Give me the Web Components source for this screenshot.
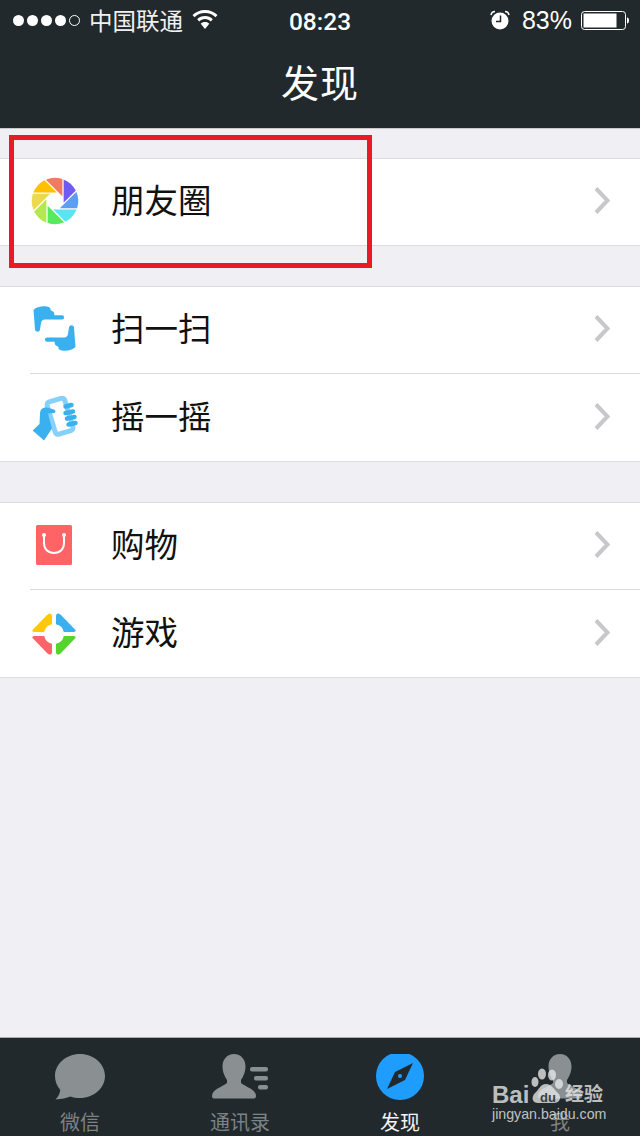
<!DOCTYPE html>
<html lang="zh">
<head>
<meta charset="utf-8">
<title>发现</title>
<style>
html, body { margin: 0; padding: 0; }
body { width: 640px; height: 1136px; overflow: hidden; background: #efeff4; font-family: "Liberation Sans", "Noto Sans CJK SC", sans-serif; }
discover-page { height: 1136px; }
</style>
</head>
<body>
<discover-page>
  <status-bar slot="top"></status-bar>
  <nav-bar slot="top" title="发现"></nav-bar>

  <row-group style="margin-top:29px">
    <row-item>
      <svg slot="icon" width="50" height="50" viewBox="-25 -24 50 50">
        <path fill="#6f5bf1" d="M8.600-21.600A23.300 23.300 0 0 1 20.800-10.400L8.600 1.800Z"/>
        <path fill="#5c9ff2" d="M8.600-21.600A23.300 23.300 0 0 1 20.800-10.400L8.600 1.800Z" transform="rotate(45)"/>
        <path fill="#5ae4f1" d="M8.600-21.600A23.300 23.300 0 0 1 20.800-10.400L8.600 1.800Z" transform="rotate(90)"/>
        <path fill="#59e95f" d="M8.600-21.600A23.300 23.300 0 0 1 20.800-10.400L8.600 1.800Z" transform="rotate(135)"/>
        <path fill="#b3e94f" d="M8.600-21.600A23.300 23.300 0 0 1 20.800-10.400L8.600 1.800Z" transform="rotate(180)"/>
        <path fill="#eed94e" d="M8.600-21.600A23.300 23.300 0 0 1 20.800-10.400L8.600 1.800Z" transform="rotate(225)"/>
        <path fill="#ffc000" d="M8.600-21.600A23.300 23.300 0 0 1 20.800-10.400L8.600 1.800Z" transform="rotate(270)"/>
        <path fill="#f17a60" d="M8.600-21.600A23.300 23.300 0 0 1 20.800-10.400L8.600 1.800Z" transform="rotate(315)"/>
      </svg>
      朋友圈
    </row-item>
  </row-group>

  <row-group style="margin-top:40px">
    <row-item>
      <svg slot="icon" width="50" height="50" viewBox="0 0 50 50">
        <g fill="#3bb0ef">
          <path d="M3.500 5C6 2 12 .8 17 1.500C20 2 21 3.500 20.500 5L23 6.500C24.500 7.500 24 9 24.500 10.300H32A2.100 2.100 0 0 1 32 14.500H15C12.500 14.500 11.500 16 11 18L10 24.500C9.500 27.500 5.500 27.500 5 24.500Z"/>
          <path d="M3.500 5C6 2 12 .8 17 1.500C20 2 21 3.500 20.500 5L23 6.500C24.500 7.500 24 9 24.500 10.300H32A2.100 2.100 0 0 1 32 14.500H15C12.500 14.500 11.500 16 11 18L10 24.500C9.500 27.500 5.500 27.500 5 24.500Z" transform="rotate(180 24.500 23.500)"/>
        </g>
      </svg>
      扫一扫
    </row-item>
    <row-item>
      <svg slot="icon" width="50" height="50" viewBox="0 0 50 50">
        <rect x="20.800" y="6.400" width="18.400" height="33.700" rx="3" fill="#fff" stroke="#85d1fc" stroke-width="5" transform="rotate(-17 30 23.200)"/>
        <path fill="#3bb0ef" d="M2.700 37.500 9.500 31 10 21C10 16 13 14 17 14.500L24 16.500C26 17.500 26 19.500 24 20L18 20.500 22 35.500 14 47.500Z"/>
        <g stroke="#3bb0ef" stroke-width="4.500" stroke-linecap="round">
          <path d="M35.500 13.500 41.500 12"/>
          <path d="M35.500 20 43 18.500"/>
          <path d="M37 25.500 44.500 24"/>
          <path d="M38.500 31.500 45.500 30"/>
        </g>
      </svg>
      摇一摇
    </row-item>
  </row-group>

  <row-group style="margin-top:40px">
    <row-item>
      <svg slot="icon" width="50" height="50" viewBox="0 0 50 50">
        <rect x="6" y="4" width="36" height="40" rx="1.500" fill="#fe6466"/>
        <path d="M14 14V22C14 28 18 32 24 32S34 28 34 22V14" fill="none" stroke="#fff" stroke-width="2"/>
        <circle cx="14" cy="14" r="2" fill="#fff"/>
        <circle cx="34" cy="14" r="2" fill="#fff"/>
      </svg>
      购物
    </row-item>
    <row-item>
      <svg slot="icon" width="50" height="50" viewBox="0 0 50 50">
        <path fill="#ffc80a" d="M3 20.500 17 6C19.500 3.500 22 4 22 7V15.200A10 10 0 0 0 14.200 23H5C2.500 23 1.500 22 3 20.500Z"/>
        <path fill="#3bb0ef" d="M3 20.500 17 6C19.500 3.500 22 4 22 7V15.200A10 10 0 0 0 14.200 23H5C2.500 23 1.500 22 3 20.500Z" transform="translate(48 0) scale(-1 1)"/>
        <path fill="#fb6468" d="M3 20.500 17 6C19.500 3.500 22 4 22 7V15.200A10 10 0 0 0 14.200 23H5C2.500 23 1.500 22 3 20.500Z" transform="translate(0 50) scale(1 -1)"/>
        <path fill="#55d42c" d="M3 20.500 17 6C19.500 3.500 22 4 22 7V15.200A10 10 0 0 0 14.200 23H5C2.500 23 1.500 22 3 20.500Z" transform="translate(48 50) scale(-1 -1)"/>
      </svg>
      游戏
    </row-item>
  </row-group>

  <tab-bar slot="bottom">
    <tab-item label="微信">
      <svg width="56" height="52" viewBox="0 0 56 52"><path fill="#8a8f91" d="M28 0C41.800 0 53 9.800 53 22S41.800 44 28 44C24.500 44 21 43.300 18.500 42.400 14.500 44 10 44.800 3.500 45.500 6.500 42.500 7.800 39.500 8.300 36 4.800 32 3 27.300 3 22 3 9.800 14.200 0 28 0Z"/></svg>
    </tab-item>
    <tab-item label="通讯录">
      <svg width="56" height="52" viewBox="0 0 56 52"><g transform="translate(-12 0)" fill="#8a8f91">
        <path d="M34 0C41 0 45.500 5.500 45.500 12.500 45.500 18 43 23 41 26V29C46 33 56 35.500 56 42C56 44 55 44.500 53 44.500H15C13 44.500 12 44 12 42 12 35.500 22 33 27 29V26C25 23 22.500 18 22.500 12.500 22.500 5.500 27 0 34 0Z"/>
        <rect x="50" y="13" width="18" height="4.500" rx="2"/><rect x="54" y="22" width="14" height="4.500" rx="2"/><rect x="58" y="31" width="10" height="4.500" rx="2"/>
      </g></svg>
    </tab-item>
    <tab-item label="发现" active>
      <svg width="56" height="52" viewBox="0 0 56 52"><circle cx="28" cy="22" r="24" fill="#1f9dff"/><path fill="#22292c" d="M41 9 33 26 15 35 23 18Z"/><circle cx="28" cy="22" r="2" fill="#1f9dff"/></svg>
    </tab-item>
    <tab-item label="我">
      <svg width="56" height="52" viewBox="0 0 56 52"><path fill="#8a8f91" d="M28 0C35 0 39.500 5.500 39.500 12.500 39.500 18 37 23 35 26V29C40 33 50 35.500 50 42 50 44 49 44.500 47 44.500H9C7 44.500 6 44 6 42 6 35.500 16 33 21 29V26C19 23 16.500 18 16.500 12.500 16.500 5.500 21 0 28 0Z"/></svg>
    </tab-item>
  </tab-bar>

  <red-mark slot="over"></red-mark>
  <baidu-mark slot="over"></baidu-mark>
</discover-page>

<script>
class DiscoverPage extends HTMLElement {
    constructor() {
        super();
        this.attachShadow({ mode: 'open' });
        this.shadowRoot.innerHTML = `
        <style>
        :host { display: flex; flex-direction: column; position: relative; width: 640px; background: #efeff4; overflow: hidden; }
        main { flex: 1; display: flex; flex-direction: column; }
        </style>
        <slot name="top"></slot>
        <main><slot></slot></main>
        <slot name="bottom"></slot>
        <slot name="over"></slot>
        `;
    }
}
customElements.define('discover-page', DiscoverPage);

class StatusBar extends HTMLElement {
    constructor() {
        super();
        this.attachShadow({ mode: 'open' });
        this.shadowRoot.innerHTML = `
        <style>
        :host { display: grid; grid-template-columns: 1fr auto 1fr; align-items: center; height: 40px; padding: 0 11px 0 13px; background: #22292c; color: #fff; font-family: "Liberation Sans", "Noto Sans CJK SC", sans-serif; }
        .left, .right { display: flex; align-items: center; }
        .right { justify-content: flex-end; }
        .dots { display: flex; gap: 3px; }
        .dots i { width: 11px; height: 11px; border-radius: 50%; background: #fff; box-sizing: border-box; }
        .dots i:last-child { background: none; border: 1px solid #fff; }
        .carrier { font-size: 23.5px; margin-left: 9px; color: #f0f0f0; }
        .wifi { margin-left: 9px; }
        .time { font-family: Roboto, "Liberation Sans", sans-serif; font-size: 24.5px; font-weight: 500; transform: translate(-1px, 1px); }
        .pct { font-size: 25px; margin-left: 11px; }
        .battery { margin-left: 9px; margin-top: 1px; }
        </style>
        <div class="left">
          <div class="dots"><i></i><i></i><i></i><i></i><i></i></div>
          <span class="carrier">中国联通</span>
          <svg class="wifi" width="26" height="20" viewBox="0 0 26 20">
            <path fill="#fff" d="M13 0C18 0 22.500 2 25.500 5L23.500 7.200C21 4.600 17.200 3 13 3S5 4.600 2.500 7.200L.5 5C3.500 2 8 0 13 0Z"/>
            <path fill="#fff" d="M13 6C16 6 18.800 7.200 20.800 9.200L18.800 11.400C17.300 9.900 15.300 9 13 9S8.700 9.900 7.200 11.400L5.200 9.200C7.200 7.200 10 6 13 6Z"/>
            <path fill="#fff" d="M13 12C14.800 12 16.300 12.600 17.300 13.700L13 19 8.700 13.700C9.700 12.600 11.200 12 13 12Z"/>
          </svg>
        </div>
        <div class="time">08:23</div>
        <div class="right">
          <svg width="22" height="20" viewBox="0 0 22 20">
            <path d="M2 5C2.500 2.500 4 1.500 6 1.500M20 5C19.500 2.500 18 1.500 16 1.500" fill="none" stroke="#fff" stroke-width="1.500"/>
            <circle cx="11" cy="11" r="8.500" fill="#fff"/>
            <path d="M11.500 5.500V11.500H7" fill="none" stroke="#22292c" stroke-width="1.500"/>
          </svg>
          <span class="pct">83%</span>
          <svg class="battery" width="48" height="20" viewBox="0 0 48 20">
            <rect x=".5" y=".5" width="44" height="18" rx="3" fill="none" stroke="#fff"/>
            <rect x="2.500" y="2.500" width="33" height="14" fill="#fff"/>
            <path fill="#fff" d="M46 6.500C47.500 6.500 48 8 48 9.500S47.500 12.500 46 12.500Z"/>
          </svg>
        </div>
        `;
    }
}
customElements.define('status-bar', StatusBar);

class NavBar extends HTMLElement {
    constructor() {
        super();
        this.attachShadow({ mode: 'open' });
    }
    connectedCallback() {
        const title = this.getAttribute('title') || '';
        this.shadowRoot.innerHTML = `
        <style>
        :host { display: flex; justify-content: center; align-items: center; height: 88px; background: #22292c; color: #fff; border-bottom: 1px solid #c9c9cc; font-family: "Noto Sans CJK SC", sans-serif; }
        h1 { margin: 0 0 7px; font-size: 38px; font-weight: 400; line-height: 1; letter-spacing: 1px; }
        </style>
        <h1>${title}</h1>
        `;
    }
}
customElements.define('nav-bar', NavBar);

class RowGroup extends HTMLElement {
    constructor() {
        super();
        this.attachShadow({ mode: 'open' });
        this.shadowRoot.innerHTML = `
        <style>
        :host { display: block; background: #fff; border-top: 1px solid #dcdcdc; border-bottom: 1px solid #dcdcdc; }
        </style>
        <slot></slot>
        `;
    }
}
customElements.define('row-group', RowGroup);

class RowItem extends HTMLElement {
    constructor() {
        super();
        this.attachShadow({ mode: 'open' });
        this.shadowRoot.innerHTML = `
        <style>
        :host { display: block; padding-left: 30px; font-family: "Noto Sans CJK SC", sans-serif; color: #111; }
        :host(:not(:first-child)) .in { border-top: 1px solid #dcdcdc; height: 87px; }
        .in { display: flex; align-items: center; height: 86px; padding-right: 28px; }
        .icon { width: 50px; height: 50px; margin-right: 31px; display: flex; }
        .label { flex: 1; font-size: 33.5px; line-height: 1; margin-top: -6px; }
        .arrow { margin-top: -2px; }
        </style>
        <div class="in">
          <div class="icon"><slot name="icon"></slot></div>
          <div class="label"><slot></slot></div>
          <svg class="arrow" width="20" height="30" viewBox="0 0 20 30"><path d="M4 2.500 15.500 14.500 4 26.500" fill="none" stroke="#c7c7cc" stroke-width="4"/></svg>
        </div>
        `;
    }
}
customElements.define('row-item', RowItem);

class TabBar extends HTMLElement {
    constructor() {
        super();
        this.attachShadow({ mode: 'open' });
        this.shadowRoot.innerHTML = `
        <style>
        :host { display: grid; grid-template-columns: repeat(4, 1fr); height: 98px; background: #22292c; border-top: 1px solid #a9a9ad; }
        </style>
        <slot></slot>
        `;
    }
}
customElements.define('tab-bar', TabBar);

class TabItem extends HTMLElement {
    constructor() {
        super();
        this.attachShadow({ mode: 'open' });
    }
    connectedCallback() {
        const label = this.getAttribute('label') || '';
        const colour = this.hasAttribute('active') ? '#f4f4f4' : '#7d8284';
        this.shadowRoot.innerHTML = `
        <style>
        :host { display: flex; flex-direction: column; align-items: center; padding-top: 16px; font-family: "Noto Sans CJK SC", sans-serif; }
        .icon { height: 52px; display: flex; }
        span { font-size: 20px; line-height: 24px; margin-top: 4px; color: ${colour}; }
        </style>
        <div class="icon"><slot></slot></div>
        <span>${label}</span>
        `;
    }
}
customElements.define('tab-item', TabItem);

class RedMark extends HTMLElement {
    constructor() {
        super();
        this.attachShadow({ mode: 'open' });
        this.shadowRoot.innerHTML = `
        <style>
        :host { position: absolute; left: 9px; top: 135px; width: 363px; height: 133px; box-sizing: border-box; border: 5px solid #e81b25; }
        </style>
        `;
    }
}
customElements.define('red-mark', RedMark);

class BaiduMark extends HTMLElement {
    constructor() {
        super();
        this.attachShadow({ mode: 'open' });
        this.shadowRoot.innerHTML = `
        <style>
        :host { position: absolute; left: 490px; top: 1066px; width: 118px; height: 60px; color: rgba(232,232,232,.8); font-family: "Liberation Sans", "Noto Sans CJK SC", sans-serif; }
        svg { position: absolute; left: 0; top: 0; }
        b { position: absolute; line-height: 1; white-space: nowrap; }
        .bai { left: 2px; top: 17px; font-size: 24px; }
        .du { left: 50px; top: 25px; font-size: 13px; color: #3a4043; }
        .jy { left: 75px; top: 19px; font-size: 19px; }
        .url { left: 2px; top: 41px; font-size: 14.200px; font-weight: 400; }
        </style>
        <svg width="118" height="60" viewBox="0 0 118 60" fill="rgba(232,232,232,.78)">
          <ellipse cx="45" cy="16" rx="3.500" ry="5"/>
          <ellipse cx="52" cy="8" rx="4" ry="5.500"/>
          <ellipse cx="62" cy="9" rx="4" ry="5.500"/>
          <ellipse cx="69" cy="18" rx="4" ry="5"/>
          <path d="M56 18C62 18 64 24 68 27 72 31 70 37 64 37H48C42 37 41 31 45 27 49 24 50 18 56 18Z"/>
        </svg>
        <b class="bai">Bai</b>
        <b class="du">du</b>
        <b class="jy">经验</b>
        <b class="url">jingyan.baidu.com</b>
        `;
    }
}
customElements.define('baidu-mark', BaiduMark);
</script>
</body>
</html>
